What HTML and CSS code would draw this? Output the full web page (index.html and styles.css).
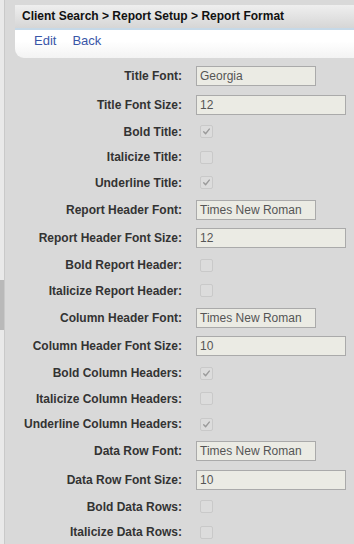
FILE: index.html
```html
<!DOCTYPE html>
<html>
<head>
<meta charset="utf-8">
<link rel="stylesheet" href="styles.css">
</head>
<body>
<div class="page">
  <div class="rail">
    <div class="rail-top"></div>
    <div class="rail-handle"></div>
    <div class="rail-bottom"></div>
  </div>
  <div class="main">
    <div class="crumbs">Client Search &gt; Report Setup &gt; Report Format</div>
    <div class="toolbar">
      <a class="tool">Edit</a>
      <a class="tool">Back</a>
    </div>
    <div class="form">
      <div class="row text"><span class="label">Title Font:</span><span class="field short">Georgia</span></div>
      <div class="row text"><span class="label">Title Font Size:</span><span class="field long">12</span></div>
      <div class="row check"><span class="label">Bold Title:</span><span class="cb on"><svg viewBox="0 0 13 13"><path d="M3.2 6.8 L5.4 9.2 L9.8 3.6" /></svg></span></div>
      <div class="row check"><span class="label">Italicize Title:</span><span class="cb"></span></div>
      <div class="row check"><span class="label">Underline Title:</span><span class="cb on"><svg viewBox="0 0 13 13"><path d="M3.2 6.8 L5.4 9.2 L9.8 3.6" /></svg></span></div>
      <div class="row text"><span class="label">Report Header Font:</span><span class="field short">Times New Roman</span></div>
      <div class="row text"><span class="label">Report Header Font Size:</span><span class="field long">12</span></div>
      <div class="row check"><span class="label">Bold Report Header:</span><span class="cb"></span></div>
      <div class="row check"><span class="label">Italicize Report Header:</span><span class="cb"></span></div>
      <div class="row text"><span class="label">Column Header Font:</span><span class="field short">Times New Roman</span></div>
      <div class="row text"><span class="label">Column Header Font Size:</span><span class="field long">10</span></div>
      <div class="row check"><span class="label">Bold Column Headers:</span><span class="cb on"><svg viewBox="0 0 13 13"><path d="M3.2 6.8 L5.4 9.2 L9.8 3.6" /></svg></span></div>
      <div class="row check"><span class="label">Italicize Column Headers:</span><span class="cb"></span></div>
      <div class="row check"><span class="label">Underline Column Headers:</span><span class="cb on"><svg viewBox="0 0 13 13"><path d="M3.2 6.8 L5.4 9.2 L9.8 3.6" /></svg></span></div>
      <div class="row text"><span class="label">Data Row Font:</span><span class="field short">Times New Roman</span></div>
      <div class="row text"><span class="label">Data Row Font Size:</span><span class="field long">10</span></div>
      <div class="row check"><span class="label">Bold Data Rows:</span><span class="cb"></span></div>
      <div class="row check"><span class="label">Italicize Data Rows:</span><span class="cb"></span></div>
    </div>
  </div>
</div>
</body>
</html>
```

FILE: styles.css
```css
html, body {
  margin: 0;
  padding: 0;
  height: 100%;
  overflow: hidden;
}
body {
  background: #d9d9d9;
  font-family: "Liberation Sans", Arial, sans-serif;
}
.page {
  display: flex;
  min-height: 544px;
}
.rail {
  width: 4px;
  flex: none;
  display: flex;
  flex-direction: column;
  border-right: 1px solid #c9c9c9;
}
.rail-top {
  height: 280px;
  background: #e9e9e9;
}
.rail-handle {
  height: 50px;
  background: #b9b9b9;
}
.rail-bottom {
  flex: 1;
  background: #e9e9e9;
}
.main {
  flex: 1;
  padding-top: 5px;
}
.crumbs {
  margin-left: 10px;
  height: 23px;
  line-height: 23px;
  padding-left: 7px;
  font-size: 12px;
  font-weight: bold;
  color: #111;
  background: linear-gradient(#efefef, #d6d6d6);
  border-bottom: 2px solid #c6d9e8;
  white-space: nowrap;
}
.toolbar {
  margin-left: 10px;
  height: 28px;
  box-sizing: border-box;
  padding-top: 3px;
  background: linear-gradient(#ffffff 40%, #f3f3f3);
  border-bottom-left-radius: 9px;
  display: flex;
  align-items: flex-start;
  gap: 16px;
  padding-left: 19px;
}
.tool {
  font-size: 13px;
  line-height: 16px;
  color: #3a56a8;
  cursor: pointer;
}
.form {
  padding-top: 4px;
}
.row {
  display: grid;
  grid-template-columns: 177px 1fr;
  column-gap: 14px;
  align-items: center;
}
.row.text {
  height: 28.5px;
}
.row.check {
  height: 25.5px;
}
.label {
  text-align: right;
  font-size: 12px;
  font-weight: bold;
  color: #333;
  white-space: nowrap;
}
.field {
  box-sizing: border-box;
  height: 20px;
  line-height: 18px;
  border: 1px solid #aaaaaa;
  background: #ebebe4;
  color: #555;
  font-size: 12px;
  padding-left: 3px;
}
.field.short {
  width: 120px;
}
.field.long {
  width: 150px;
}
.cb {
  box-sizing: border-box;
  width: 13px;
  height: 13px;
  margin-left: 4px;
  border: 1px solid #c9c9c9;
  border-radius: 2px;
  background: #dcdcdc;
  display: flex;
}
.cb svg {
  width: 11px;
  height: 11px;
}
.cb svg path {
  fill: none;
  stroke: #9a9a9a;
  stroke-width: 1.6;
  stroke-linecap: round;
  stroke-linejoin: round;
}
```
